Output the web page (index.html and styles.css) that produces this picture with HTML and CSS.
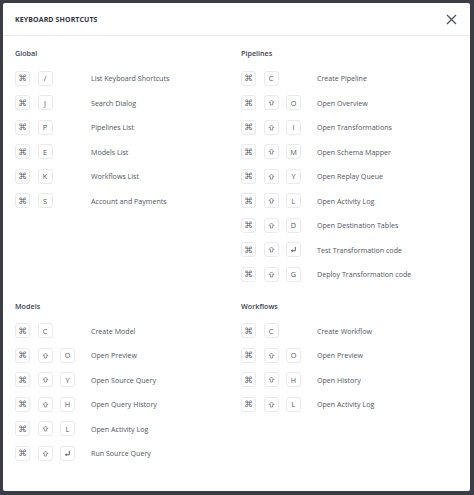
FILE: index.html
```html
<!DOCTYPE html>
<html>
<head>
<meta charset="utf-8">
<link rel="stylesheet" href="styles.css">
</head>
<body>
<div class="dialog">
  <div class="header">
    <span class="title">KEYBOARD SHORTCUTS</span>
    <svg class="close" width="11" height="11" viewBox="0 0 11 11"><path d="M1 1L10 10M10 1L1 10" stroke="#4b505b" stroke-width="1.2" fill="none"/></svg>
  </div>
  <div class="body">
    <section class="group">
      <h3>Global</h3>
      <div class="row"><span class="key cmd">⌘</span><span class="key">/</span><span class="key empty"></span><span class="label">List Keyboard Shortcuts</span></div>
      <div class="row"><span class="key cmd">⌘</span><span class="key">J</span><span class="key empty"></span><span class="label">Search Dialog</span></div>
      <div class="row"><span class="key cmd">⌘</span><span class="key">P</span><span class="key empty"></span><span class="label">Pipelines List</span></div>
      <div class="row"><span class="key cmd">⌘</span><span class="key">E</span><span class="key empty"></span><span class="label">Models List</span></div>
      <div class="row"><span class="key cmd">⌘</span><span class="key">K</span><span class="key empty"></span><span class="label">Workflows List</span></div>
      <div class="row"><span class="key cmd">⌘</span><span class="key">S</span><span class="key empty"></span><span class="label">Account and Payments</span></div>
    </section>
    <section class="group">
      <h3>Pipelines</h3>
      <div class="row"><span class="key cmd">⌘</span><span class="key">C</span><span class="key empty"></span><span class="label">Create Pipeline</span></div>
      <div class="row"><span class="key cmd">⌘</span><span class="key shift"><svg width="7" height="7" viewBox="0 0 7 7"><path d="M3.5 1L6 3.6H4.6V6H2.4V3.6H1Z" fill="none" stroke="#6b707a" stroke-width="0.7" stroke-linejoin="round"/></svg></span><span class="key">O</span><span class="label">Open Overview</span></div>
      <div class="row"><span class="key cmd">⌘</span><span class="key shift"><svg width="7" height="7" viewBox="0 0 7 7"><path d="M3.5 1L6 3.6H4.6V6H2.4V3.6H1Z" fill="none" stroke="#6b707a" stroke-width="0.7" stroke-linejoin="round"/></svg></span><span class="key">I</span><span class="label">Open Transformations</span></div>
      <div class="row"><span class="key cmd">⌘</span><span class="key shift"><svg width="7" height="7" viewBox="0 0 7 7"><path d="M3.5 1L6 3.6H4.6V6H2.4V3.6H1Z" fill="none" stroke="#6b707a" stroke-width="0.7" stroke-linejoin="round"/></svg></span><span class="key">M</span><span class="label">Open Schema Mapper</span></div>
      <div class="row"><span class="key cmd">⌘</span><span class="key shift"><svg width="7" height="7" viewBox="0 0 7 7"><path d="M3.5 1L6 3.6H4.6V6H2.4V3.6H1Z" fill="none" stroke="#6b707a" stroke-width="0.7" stroke-linejoin="round"/></svg></span><span class="key">Y</span><span class="label">Open Replay Queue</span></div>
      <div class="row"><span class="key cmd">⌘</span><span class="key shift"><svg width="7" height="7" viewBox="0 0 7 7"><path d="M3.5 1L6 3.6H4.6V6H2.4V3.6H1Z" fill="none" stroke="#6b707a" stroke-width="0.7" stroke-linejoin="round"/></svg></span><span class="key">L</span><span class="label">Open Activity Log</span></div>
      <div class="row"><span class="key cmd">⌘</span><span class="key shift"><svg width="7" height="7" viewBox="0 0 7 7"><path d="M3.5 1L6 3.6H4.6V6H2.4V3.6H1Z" fill="none" stroke="#6b707a" stroke-width="0.7" stroke-linejoin="round"/></svg></span><span class="key">D</span><span class="label">Open Destination Tables</span></div>
      <div class="row"><span class="key cmd">⌘</span><span class="key shift"><svg width="7" height="7" viewBox="0 0 7 7"><path d="M3.5 1L6 3.6H4.6V6H2.4V3.6H1Z" fill="none" stroke="#6b707a" stroke-width="0.7" stroke-linejoin="round"/></svg></span><span class="key"><svg width="7" height="7" viewBox="0 0 7 7"><path d="M5.3 0.8V4.8H1.5M2.7 3.6L1.5 4.8L2.7 6" fill="none" stroke="#4b505b" stroke-width="0.9"/></svg></span><span class="label">Test Transformation code</span></div>
      <div class="row"><span class="key cmd">⌘</span><span class="key shift"><svg width="7" height="7" viewBox="0 0 7 7"><path d="M3.5 1L6 3.6H4.6V6H2.4V3.6H1Z" fill="none" stroke="#6b707a" stroke-width="0.7" stroke-linejoin="round"/></svg></span><span class="key">G</span><span class="label">Deploy Transformation code</span></div>
    </section>
    <section class="group">
      <h3>Models</h3>
      <div class="row"><span class="key cmd">⌘</span><span class="key">C</span><span class="key empty"></span><span class="label">Create Model</span></div>
      <div class="row"><span class="key cmd">⌘</span><span class="key shift"><svg width="7" height="7" viewBox="0 0 7 7"><path d="M3.5 1L6 3.6H4.6V6H2.4V3.6H1Z" fill="none" stroke="#6b707a" stroke-width="0.7" stroke-linejoin="round"/></svg></span><span class="key">O</span><span class="label">Open Preview</span></div>
      <div class="row"><span class="key cmd">⌘</span><span class="key shift"><svg width="7" height="7" viewBox="0 0 7 7"><path d="M3.5 1L6 3.6H4.6V6H2.4V3.6H1Z" fill="none" stroke="#6b707a" stroke-width="0.7" stroke-linejoin="round"/></svg></span><span class="key">Y</span><span class="label">Open Source Query</span></div>
      <div class="row"><span class="key cmd">⌘</span><span class="key shift"><svg width="7" height="7" viewBox="0 0 7 7"><path d="M3.5 1L6 3.6H4.6V6H2.4V3.6H1Z" fill="none" stroke="#6b707a" stroke-width="0.7" stroke-linejoin="round"/></svg></span><span class="key">H</span><span class="label">Open Query History</span></div>
      <div class="row"><span class="key cmd">⌘</span><span class="key shift"><svg width="7" height="7" viewBox="0 0 7 7"><path d="M3.5 1L6 3.6H4.6V6H2.4V3.6H1Z" fill="none" stroke="#6b707a" stroke-width="0.7" stroke-linejoin="round"/></svg></span><span class="key">L</span><span class="label">Open Activity Log</span></div>
      <div class="row"><span class="key cmd">⌘</span><span class="key shift"><svg width="7" height="7" viewBox="0 0 7 7"><path d="M3.5 1L6 3.6H4.6V6H2.4V3.6H1Z" fill="none" stroke="#6b707a" stroke-width="0.7" stroke-linejoin="round"/></svg></span><span class="key"><svg width="7" height="7" viewBox="0 0 7 7"><path d="M5.3 0.8V4.8H1.5M2.7 3.6L1.5 4.8L2.7 6" fill="none" stroke="#4b505b" stroke-width="0.9"/></svg></span><span class="label">Run Source Query</span></div>
    </section>
    <section class="group">
      <h3>Workflows</h3>
      <div class="row"><span class="key cmd">⌘</span><span class="key">C</span><span class="key empty"></span><span class="label">Create Workflow</span></div>
      <div class="row"><span class="key cmd">⌘</span><span class="key shift"><svg width="7" height="7" viewBox="0 0 7 7"><path d="M3.5 1L6 3.6H4.6V6H2.4V3.6H1Z" fill="none" stroke="#6b707a" stroke-width="0.7" stroke-linejoin="round"/></svg></span><span class="key">O</span><span class="label">Open Preview</span></div>
      <div class="row"><span class="key cmd">⌘</span><span class="key shift"><svg width="7" height="7" viewBox="0 0 7 7"><path d="M3.5 1L6 3.6H4.6V6H2.4V3.6H1Z" fill="none" stroke="#6b707a" stroke-width="0.7" stroke-linejoin="round"/></svg></span><span class="key">H</span><span class="label">Open History</span></div>
      <div class="row"><span class="key cmd">⌘</span><span class="key shift"><svg width="7" height="7" viewBox="0 0 7 7"><path d="M3.5 1L6 3.6H4.6V6H2.4V3.6H1Z" fill="none" stroke="#6b707a" stroke-width="0.7" stroke-linejoin="round"/></svg></span><span class="key">L</span><span class="label">Open Activity Log</span></div>
    </section>
  </div>
</div>
</body>
</html>
```
FILE: styles.css
```css
* { box-sizing: border-box; }
html, body { margin: 0; padding: 0; }
body {
  background: #3a3d44;
  width: 474px;
  height: 495px;
  padding: 3px 4px 4px 3px;
  font-family: "Open Sans", "Liberation Sans", sans-serif;
  color: #4b505b;
}
.dialog {
  background: #fff;
  width: 467px;
  height: 488px;
  border-radius: 2px;
  display: flex;
  flex-direction: column;
}
.header {
  height: 33px;
  border-bottom: 1px solid #ebecef;
  display: flex;
  align-items: center;
  justify-content: space-between;
  padding: 0 13px 0 12px;
}
.title {
  font-size: 7px;
  font-weight: 700;
  color: #2f3542;
  letter-spacing: 0.1px;
}
.close { display: block; }
.body {
  padding: 10px 12px 0 12px;
  display: grid;
  grid-template-columns: 226px 1fr;
  row-gap: 12px;
  align-items: start;
}
h3 {
  margin: 0 0 6px 0;
  height: 14px;
  line-height: 14px;
  font-size: 7.2px;
  font-weight: 600;
  color: #3d4350;
}
.row {
  height: 24.5px;
  display: flex;
  align-items: center;
  gap: 7.5px;
}
.key {
  width: 15px;
  height: 15px;
  border: 1px solid #e8eaee;
  border-radius: 3px;
  display: flex;
  align-items: center;
  justify-content: center;
  font-size: 7.3px;
  color: #505561;
  flex: none;
}
.key.cmd { font-family: "DejaVu Sans", sans-serif; font-size: 8.5px; color: #5a5f6a; }
.key.empty { visibility: hidden; }
.label {
  margin-left: 8.5px;
  font-size: 7.1px;
  color: #505561;
  white-space: nowrap;
}
```
